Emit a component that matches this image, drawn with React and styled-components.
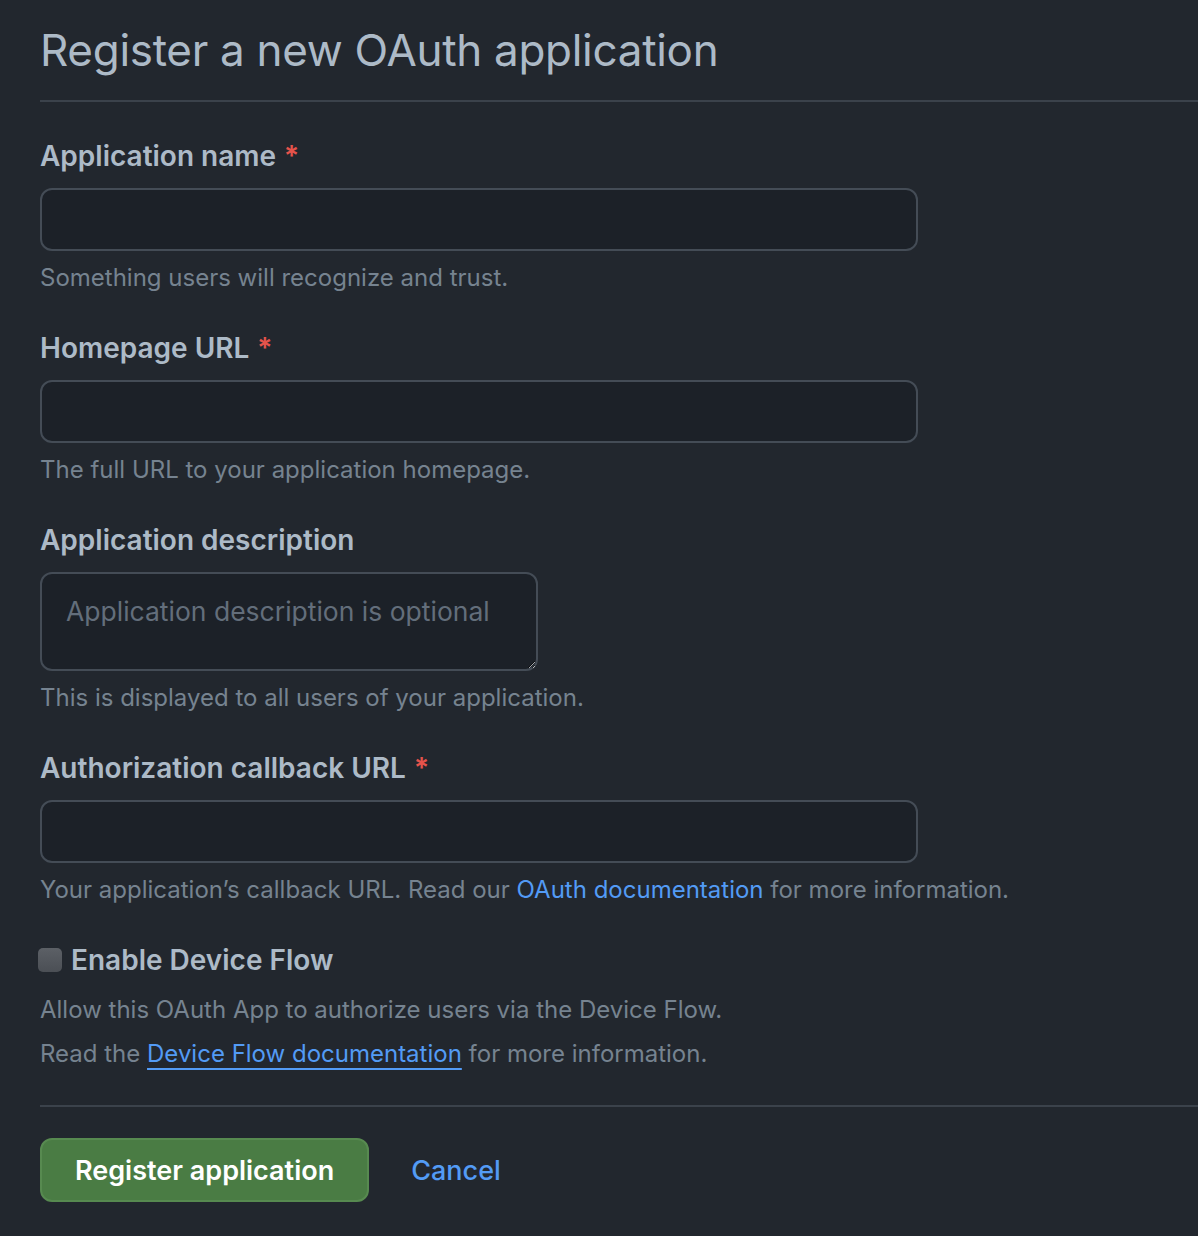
import React from "react";
import styled, { createGlobalStyle } from "styled-components";

const Global = createGlobalStyle`
  html, body { margin: 0; padding: 0; background: #22272e; }
  body {
    font-family: Inter, "Noto Sans", "Liberation Sans", sans-serif;
    color: #adbac7;
    -webkit-font-smoothing: antialiased;
  }
  * { box-sizing: border-box; }
`;

const Page = styled.div`
  padding-left: 40px;
  min-height: 1236px;
  overflow: hidden;
`;

const Subhead = styled.div`
  border-bottom: 2px solid #3b424b;
  padding: 14px 0 14px;
`;

const Title = styled.h1`
  margin: 0;
  font-size: 44px;
  line-height: 72px;
  font-weight: 400;
  color: #adbac7;
  letter-spacing: -0.3px;
`;

const Form = styled.form`
  padding-top: 33px;
`;

const Group = styled.div`
  margin-bottom: ${(p) => (p.$last ? "33px" : "31px")};
`;

const Label = styled.label`
  display: block;
  font-size: 28px;
  line-height: 42px;
  font-weight: 600;
  color: #adbac7;
  margin-bottom: 11px;
`;

const Required = styled.span`
  color: #e5534b;
  margin-left: 8px;
  font-weight: 600;
`;

const Input = styled.input`
  display: block;
  width: 878px;
  height: 63px;
  background: #1c2128;
  border: 2px solid #444c56;
  border-radius: 12px;
  color: #adbac7;
  font: inherit;
  font-size: 28px;
  padding: 0 24px;
  outline: none;
`;

const TextArea = styled.textarea`
  display: block;
  width: 498px;
  height: 99px;
  background: #1c2128;
  border: 2px solid #444c56;
  border-radius: 12px;
  color: #adbac7;
  font-family: inherit;
  font-size: 26.5px;
  line-height: 40px;
  padding: 17px 8px 16px 24px;
  resize: vertical;
  outline: none;
  &::placeholder { color: #636e7b; }
`;

const Note = styled.p`
  margin: 9px 0 0;
  font-size: 24px;
  line-height: 36px;
  color: #768390;
  & + & { margin-top: 8px; }
`;

const Link = styled.a`
  color: #539bf5;
  text-decoration: ${(p) => (p.$underline ? "underline" : "none")};
  text-underline-offset: 6px;
  text-decoration-thickness: 2px;
`;

const CheckRow = styled.label`
  display: flex;
  align-items: center;
  gap: 9px;
  font-size: 28px;
  line-height: 42px;
  font-weight: 600;
  color: #adbac7;
`;

const Check = styled.input`
  appearance: none;
  -webkit-appearance: none;
  margin: 0 0 0 -2px;
  width: 24px;
  height: 24px;
  border-radius: 5px;
  background: linear-gradient(#5c6066, #4b4f55);
  border: none;
`;

const CheckNote = styled(Note)`
  margin-top: 11px;
`;

const Actions = styled.div`
  border-top: 2px solid #3b424b;
  padding-top: 31px;
  display: flex;
  align-items: center;
  gap: 42px;
`;

const PrimaryButton = styled.button`
  height: 64px;
  padding: 0 33px;
  background: #4a7c44;
  border: 2px solid #578a50;
  border-radius: 12px;
  color: #ffffff;
  font-family: inherit;
  font-size: 27px;
  font-weight: 600;
  cursor: pointer;
`;

const CancelLink = styled.a`
  color: #539bf5;
  font-size: 27px;
  font-weight: 500;
  text-decoration: none;
`;

export default function App() {
  return (
    <Page>
      <Global />
      <Subhead>
        <Title>Register a new OAuth application</Title>
      </Subhead>
      <Form onSubmit={(e) => e.preventDefault()}>
        <Group>
          <Label>
            Application name<Required>*</Required>
          </Label>
          <Input type="text" />
          <Note>Something users will recognize and trust.</Note>
        </Group>
        <Group>
          <Label>
            Homepage URL<Required>*</Required>
          </Label>
          <Input type="text" />
          <Note>The full URL to your application homepage.</Note>
        </Group>
        <Group>
          <Label>Application description</Label>
          <TextArea placeholder="Application description is optional" />
          <Note>This is displayed to all users of your application.</Note>
        </Group>
        <Group>
          <Label>
            Authorization callback URL<Required>*</Required>
          </Label>
          <Input type="text" />
          <Note>
            Your application’s callback URL. Read our{" "}
            <Link href="#">OAuth documentation</Link> for more information.
          </Note>
        </Group>
        <Group $last>
          <CheckRow>
            <Check type="checkbox" />
            Enable Device Flow
          </CheckRow>
          <CheckNote>Allow this OAuth App to authorize users via the Device Flow.</CheckNote>
          <Note>
            Read the <Link href="#" $underline>Device Flow documentation</Link> for more information.
          </Note>
        </Group>
        <Actions>
          <PrimaryButton type="submit">Register application</PrimaryButton>
          <CancelLink href="#">Cancel</CancelLink>
        </Actions>
      </Form>
    </Page>
  );
}
